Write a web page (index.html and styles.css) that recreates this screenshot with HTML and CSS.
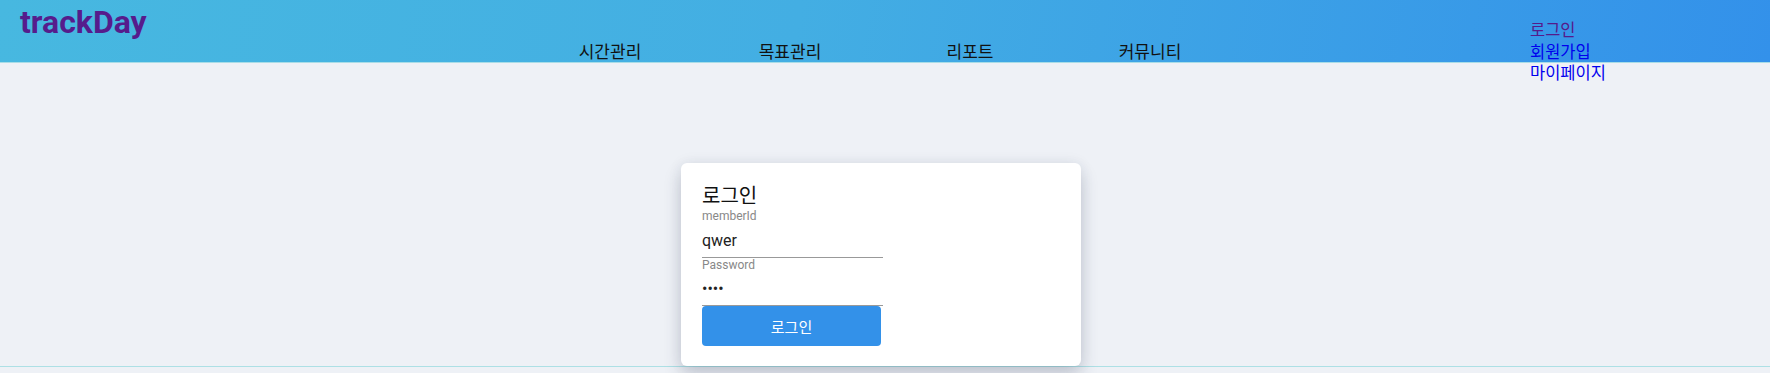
FILE: index.html
```html
<!DOCTYPE html>
<html lang="ko">
<head>
<meta charset="utf-8">
<title>trackDay</title>
<link rel="stylesheet" href="styles.css">
</head>
<body>
<header class="topbar">
  <a class="logo" href="#">trackDay</a>
  <nav class="menu">
    <a class="menu-item" href="#">시간관리</a>
    <a class="menu-item" href="#">목표관리</a>
    <a class="menu-item" href="#">리포트</a>
    <a class="menu-item" href="#">커뮤니티</a>
  </nav>
  <div class="account">
    <a class="account-link visited" href="#">로그인</a>
    <a class="account-link" href="#">회원가입</a>
    <a class="account-link" href="#">마이페이지</a>
  </div>
</header>
<main class="stage">
  <section class="card">
    <h2 class="card-title">로그인</h2>
    <label class="field-label" for="memberId">memberId</label>
    <input class="field-input first" id="memberId" type="text" value="qwer">
    <label class="field-label" for="pw">Password</label>
    <input class="field-input" id="pw" type="password" value="qwer">
    <button class="submit" type="button">로그인</button>
  </section>
</main>
<footer class="foot"></footer>
</body>
</html>
```
FILE: styles.css
```css
html, body {
  margin: 0;
  padding: 0;
}
body {
  background: #eef1f6;
  font-family: Roboto, "Noto Sans CJK KR", sans-serif;
  color: #111;
  min-height: 373px;
}
.topbar {
  height: 62px;
  border-bottom: 1px solid #a9dde7;
  display: flex;
  align-items: flex-start;
  background: linear-gradient(100deg, #47b8e0 0%, #43aee3 45%, #3391ea 100%);
}
.logo {
  flex: 0 0 500px;
  margin-left: 20px;
  margin-top: 3px;
  font: 700 32px/38px Roboto, sans-serif;
  color: #561c8c;
  text-decoration: none;
}
.menu {
  display: flex;
  margin-top: 42px;
}
.menu-item {
  width: 180px;
  text-align: center;
  font-size: 17px;
  line-height: 20px;
  color: #111;
  text-decoration: none;
  white-space: nowrap;
}
.account {
  display: flex;
  flex-direction: column;
  margin-left: 290px;
  margin-top: 20px;
}
.account-link {
  font-size: 16.5px;
  line-height: 21.7px;
  color: #0000ee;
  text-decoration: none;
  white-space: nowrap;
}
.account-link.visited {
  color: #551a8b;
}
.stage {
  display: flex;
  justify-content: center;
  padding: 100px 8px 0 0;
}
.card {
  width: 400px;
  box-sizing: border-box;
  background: #fff;
  border-radius: 6px;
  padding: 20px 21px 20px;
  display: flex;
  flex-direction: column;
  align-items: flex-start;
  box-shadow: 0 10px 18px rgba(40, 50, 80, 0.2), 0 0 14px rgba(40, 50, 80, 0.08);
}
.card-title {
  margin: 0;
  font-size: 20px;
  font-weight: 400;
  line-height: 26px;
  color: #111;
}
.field-label {
  font-size: 12px;
  line-height: 14px;
  color: #888;
}
.field-input {
  width: 181px;
  height: 34px;
  box-sizing: border-box;
  border: none;
  border-bottom: 1px solid #999;
  padding: 0;
  margin: 0;
  background: transparent;
  font-family: Roboto, sans-serif;
  font-size: 16px;
  color: #222;
  outline: none;
}
.field-input.first {
  height: 35px;
}
.submit {
  width: 179px;
  height: 40px;
  border: none;
  border-radius: 4px;
  background: #3391e9;
  color: #fff;
  font-family: Roboto, "Noto Sans CJK KR", sans-serif;
  font-size: 15px;
  padding: 0;
  margin: 0;
}
.foot {
  border-top: 1px solid #ade0e5;
  height: 10px;
}
```
